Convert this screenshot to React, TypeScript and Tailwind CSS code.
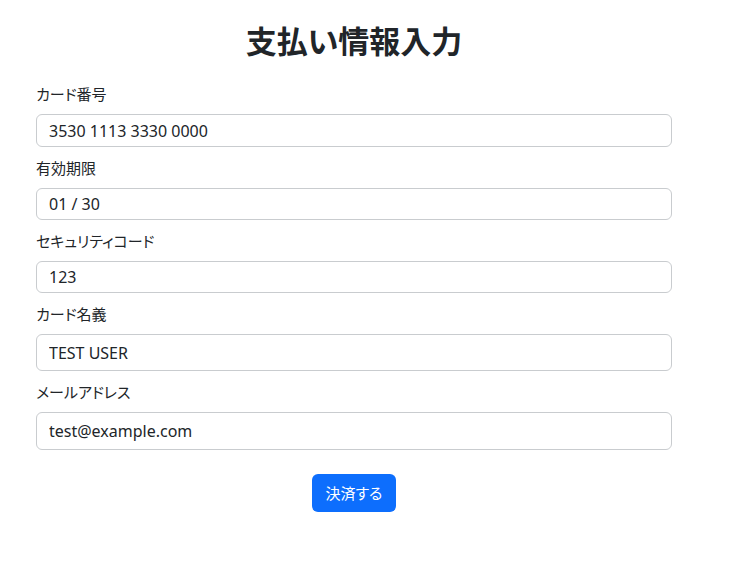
const fields = [
  { label: 'カード番号', value: '3530 1113 3330 0000', h: 'h-[33px]' },
  { label: '有効期限', value: '01 / 30', h: 'h-[32px]' },
  { label: 'セキュリティコード', value: '123', h: 'h-[32px]' },
  { label: 'カード名義', value: 'TEST USER', h: 'h-[37px]' },
  { label: 'メールアドレス', value: 'test@example.com', h: 'h-[38px]' },
];

export default function App() {
  return (
    <div className="min-h-screen bg-white font-['Noto_Sans','Noto_Sans_CJK_JP',sans-serif] text-[#212529]">
      <div className="ml-[36px] w-[636px] pt-[21px]">
        <h1 className="mb-[21px] text-center text-[31px] font-bold leading-[40px] [font-feature-settings:'palt']">
          支払い情報入力
        </h1>
        <form className="flex flex-col gap-[9px]">
          {fields.map((field) => (
            <div key={field.label} className="flex flex-col">
              <label className="mb-[8px] text-[15px] leading-[24px] [font-feature-settings:'palt']">
                {field.label}
              </label>
              <input
                readOnly
                value={field.value}
                className={`${field.h} w-full rounded-[6px] border border-[#c9cccf] bg-white px-[12px] text-[16px] text-[#212529] outline-none`}
              />
            </div>
          ))}
          <div className="mt-[15px] flex justify-center">
            <button
              type="button"
              className="h-[38px] w-[84px] rounded-[6px] bg-[#0d6efd] text-[15px] text-white [font-feature-settings:'palt']"
            >
              決済する
            </button>
          </div>
        </form>
      </div>
    </div>
  );
}
